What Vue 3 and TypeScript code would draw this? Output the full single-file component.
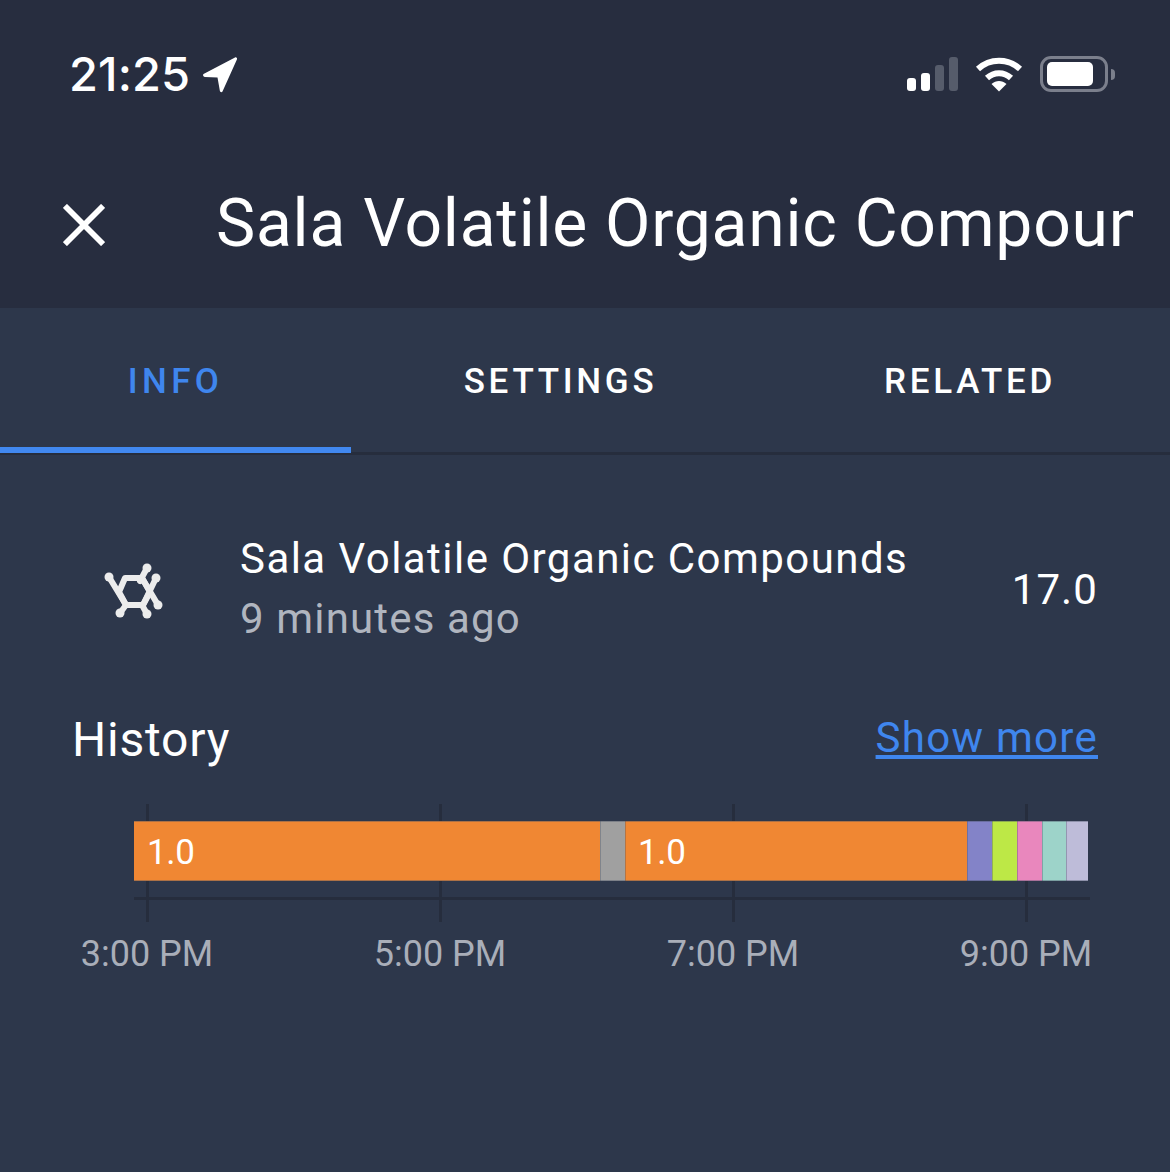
<script setup lang="ts">
interface Segment { color: string; width: number; label?: string }
const segments: Segment[] = [
  { color: '#f08733', width: 466, label: '1.0' },
  { color: '#a0a0a0', width: 25 },
  { color: '#f08733', width: 342, label: '1.0' },
  { color: '#8383c8', width: 25 },
  { color: '#bde846', width: 25 },
  { color: '#e987bd', width: 24.5 },
  { color: '#9dd3c9', width: 24 },
  { color: '#bebcd9', width: 22.5 },
]
const ticks = ['3:00 PM', '5:00 PM', '7:00 PM', '9:00 PM']
</script>

<template>
  <div class="screen">
    <header class="header">
      <div class="status">
        <div class="status-left">
          <span class="time">21:25</span>
          <svg class="arrow" viewBox="0 0 36 36" aria-hidden="true">
            <path d="M1.500 17.500 33 1c1.300-.6 2.500.6 1.900 1.900L20.500 35c-.6 1.200-2.300 1-2.600-.4L15.500 21 2.800 20.500c-1.600-.1-2.300-2.200-1.300-3Z" fill="#fff" />
          </svg>
        </div>
        <div class="status-right">
          <svg class="signal" viewBox="0 0 52 34" aria-hidden="true">
            <rect x="0" y="21" width="9" height="13" rx="3" fill="#fff" />
            <rect x="14" y="16" width="9" height="18" rx="3" fill="#fff" />
            <rect x="28" y="8" width="9" height="26" rx="3" fill="#565c6b" />
            <rect x="42" y="0" width="9" height="34" rx="3" fill="#565c6b" />
          </svg>
          <svg class="wifi" viewBox="0 0 48 36" aria-hidden="true">
            <path d="M3 13C15 2 33 2 45 13" fill="none" stroke="#fff" stroke-width="6" />
            <path d="M12 22C19 15.500 29 15.500 36 22" fill="none" stroke="#fff" stroke-width="6" />
            <path d="M16.500 28c4.500-4 10.500-4 15 0L24 35.500Z" fill="#fff" />
          </svg>
          <div class="battery">
            <div class="battery-body"><div class="battery-fill"></div></div>
            <div class="battery-cap"></div>
          </div>
        </div>
      </div>
      <div class="title-bar">
        <svg class="close" viewBox="0 0 44 44" aria-hidden="true">
          <path d="M2 2 42 42M42 2 2 42" stroke="#fff" stroke-width="6" fill="none" />
        </svg>
        <h1 class="title">Sala Volatile Organic Compounds</h1>
      </div>
    </header>

    <nav class="tabs">
      <div class="tab active"><span>INFO</span></div>
      <div class="tab settings"><span>SETTINGS</span></div>
      <div class="tab related"><span>RELATED</span></div>
    </nav>

    <section class="entity">
      <svg class="molecule" viewBox="0 0 90 80" aria-hidden="true">
        <g fill="none" stroke="#ececec" stroke-width="6" stroke-linecap="round" stroke-linejoin="round">
          <path d="M35 28H52L60 42 53 55H36L29 42Z" />
          <path d="M19 27 36 55M57 18 50 31M66 28 53 55M68 55 52 28M30 63 36 55M57 64 52 55" />
        </g>
        <g fill="#ececec">
          <circle cx="19" cy="27" r="4.500" /><circle cx="57" cy="18" r="4.500" />
          <circle cx="66" cy="28" r="4.500" /><circle cx="68" cy="55" r="4.500" />
          <circle cx="30" cy="63" r="4.500" /><circle cx="57" cy="64" r="4.500" />
        </g>
      </svg>
      <div class="entity-text">
        <div class="entity-name">Sala Volatile Organic Compounds</div>
        <div class="entity-time">9 minutes ago</div>
      </div>
      <div class="entity-value">17.0</div>
    </section>

    <section class="history-head">
      <h2 class="history">History</h2>
      <a class="more">Show more</a>
    </section>

    <section class="chart">
      <div class="plot">
        <div class="gridlines">
          <i v-for="t in ticks" :key="t" class="vline"></i>
        </div>
        <div class="hline"></div>
        <div class="bar">
          <div
            v-for="(s, i) in segments"
            :key="i"
            class="segment"
            :style="{ background: s.color, width: s.width + 'px' }"
          >{{ s.label }}</div>
        </div>
      </div>
      <div class="axis">
        <span v-for="t in ticks" :key="t" class="tick">{{ t }}</span>
      </div>
    </section>
  </div>
</template>

<style scoped>
.screen {
  width: 1170px;
  height: 1172px;
  overflow: hidden;
  background: #2d374b;
  color: #fff;
  font-family: Roboto, sans-serif;
}
.header {
  height: 308px;
  background: #272d3f;
  box-sizing: border-box;
  padding-top: 46px;
}
.status {
  height: 56px;
  display: flex;
  justify-content: space-between;
  align-items: center;
  padding: 0 55px 0 69px;
}
.status-left { display: flex; align-items: center; gap: 12px; }
.time {
  font-family: Inter, sans-serif;
  font-weight: 500;
  font-size: 47px;
  line-height: 56px;
  letter-spacing: 0.1px;
}
.arrow { width: 36px; height: 37px; }
.status-right { display: flex; align-items: center; }
.signal { width: 52px; height: 34px; margin-right: 16px; }
.wifi { width: 48px; height: 36px; margin-right: 17px; }
.battery { display: flex; align-items: center; }
.battery-body {
  width: 68px;
  height: 36px;
  box-sizing: border-box;
  border: 3px solid #7b7f8c;
  border-radius: 11px;
  padding: 3px 4px;
}
.battery-fill { width: 46px; height: 100%; background: #fff; border-radius: 5px; }
.battery-cap {
  width: 4px;
  height: 11px;
  margin-left: 3px;
  background: #7b7f8c;
  border-radius: 0 6px 6px 0;
}
.title-bar {
  display: flex;
  align-items: center;
  height: 130px;
  margin-top: 58px;
  padding-left: 63px;
}
.close { width: 42px; height: 42px; flex: none; }
.title {
  margin: -2px 0 0 111px;
  font-weight: 400;
  font-size: 66px;
  line-height: 80px;
  white-space: nowrap;
  overflow: hidden;
  width: 917px;
  letter-spacing: 0.75px;
}
.tabs {
  height: 147px;
  box-sizing: border-box;
  display: flex;
  border-bottom: 3px solid #262d3d;
}
.tab {
  display: flex;
  align-items: center;
  justify-content: center;
  font-size: 35px;
  font-weight: 500;
  letter-spacing: 3.700px;
  height: 145px;
  padding-top: 2px;
  box-sizing: border-box;
}
.tab.active {
  width: 351px;
  color: #3f86ee;
  border-bottom: 6px solid #4188f0;
  padding: 8px 0 0 0;
  letter-spacing: 4.400px;
}
.tab.settings { width: 419px; }
.tab.related { width: 400px; }
.entity {
  display: flex;
  align-items: center;
  height: 188px;
  margin-top: 40px;
  padding: 0 72px 0 90px;
}
.molecule { width: 90px; height: 80px; flex: none; margin-top: 2px; }
.entity-text { flex: 1; margin-left: 60px; }
.entity-name { font-size: 42px; line-height: 60px; letter-spacing: 1.450px; }
.entity-time { font-size: 42px; line-height: 60px; letter-spacing: 1.150px; color: #b0b5bf; }
.entity-value { font-size: 42px; letter-spacing: 1.100px; }
.history-head {
  display: flex;
  justify-content: space-between;
  align-items: center;
  height: 60px;
  padding: 0 72px 0 72px;
  margin-top: 27px;
}
.history { margin: 0; font-weight: 400; font-size: 48px; line-height: 60px; letter-spacing: 0.800px; }
.more {
  font-size: 42px;
  color: #3f86ee;
  text-decoration: underline;
  letter-spacing: 1.280px;
  margin-top: -6px;
}
.chart { margin-top: 34px; }
.plot {
  position: relative;
  height: 118px;
  margin-left: 134px;
  width: 956px;
}
.gridlines {
  position: absolute;
  inset: 0;
}
.vline {
  position: absolute;
  top: 0;
  bottom: 0;
  width: 3px;
  background: #262d3d;
}
.vline:nth-child(1) { left: 12px; }
.vline:nth-child(2) { left: 305px; }
.vline:nth-child(3) { left: 598px; }
.vline:nth-child(4) { left: 891px; }
.hline {
  position: absolute;
  left: 0;
  right: 0;
  top: 93px;
  height: 3px;
  background: #262d3d;
}
.bar {
  position: absolute;
  left: 0;
  top: 17px;
  width: 954px;
  height: 60px;
  display: flex;
}
.segment {
  flex: none;
  box-sizing: border-box;
  padding: 2px 0 0 13px;
  font-size: 35px;
  font-weight: 400;
  letter-spacing: -0.3px;
  line-height: 60px;
  color: #fff;
  box-shadow: inset 0 1px 0 rgba(70, 80, 100, 0.4), inset 0 -1px 0 rgba(70, 80, 100, 0.4);
}
.segment + .segment {
  box-shadow: inset 1px 0 0 rgba(70, 80, 100, 0.35), inset 0 1px 0 rgba(70, 80, 100, 0.4), inset 0 -1px 0 rgba(70, 80, 100, 0.4);
}
.axis {
  display: flex;
  margin-top: 5px;
  margin-left: 147px;
}
.tick {
  flex: none;
  width: 293px;
  transform: translateX(-146.500px);
  text-align: center;
  font-size: 36px;
  line-height: 54px;
  color: #a9aeb9;
}
</style>

<style>
html, body { margin: 0; background: #2d374b; }
</style>
